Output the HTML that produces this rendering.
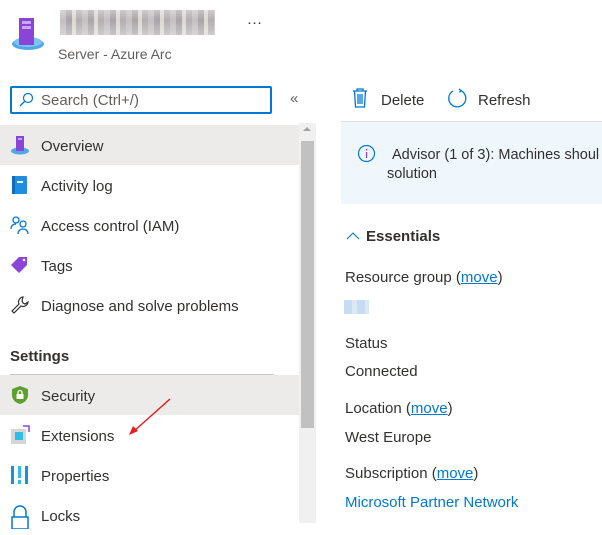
<!DOCTYPE html>
<html><head><style>
*{margin:0;padding:0;box-sizing:border-box}
body{width:602px;height:523px;overflow:hidden;background:#fff;font-family:"Liberation Sans",sans-serif;color:#323130;position:relative;font-size:15px}
.a{position:absolute;white-space:nowrap}
.row{position:absolute;left:0;width:299px;height:40px}
.row span{position:absolute;left:41px;top:13px}
.ic{position:absolute;left:10px;top:10px}
a{color:#0078d4;text-decoration:underline}
</style></head><body>
<svg class="a" style="left:8px;top:15px" width="40" height="38" viewBox="0 0 40 38"><ellipse cx="20" cy="29" rx="16" ry="6" fill="#50a8e8"/><ellipse cx="20" cy="27" rx="14" ry="5" fill="#7fc3f2"/><rect x="11" y="3" width="15" height="27" fill="#8a44d8"/><rect x="14" y="6" width="9" height="3" fill="#c9a6f2"/><rect x="14" y="11" width="9" height="3" fill="#c9a6f2"/></svg>
<div class="a" style="left:60px;top:10px;width:155px;height:25px;background:linear-gradient(180deg,rgba(255,255,255,.35),rgba(255,255,255,0) 40%,rgba(255,255,255,.35)),repeating-linear-gradient(90deg,#c4bfc0 0 6px,#a9a4a8 6px 12px,#dcd7d3 12px 16px,#b3aeb1 16px 22px);"></div>
<div class="a" style="left:247px;top:14px;font-size:15px;color:#323130">···</div>
<div class="a" style="left:58px;top:46px;font-size:14px;color:#605e5c">Server - Azure Arc</div>
<div class="a" style="left:10px;top:86px;width:262px;height:28px;border:2px solid #0078d4;border-radius:2px"></div>
<svg class="a" style="left:18px;top:92px" width="16" height="16" viewBox="0 0 16 16"><circle cx="10" cy="6" r="4.5" fill="none" stroke="#0078d4" stroke-width="1.2"/><path d="M7 9L2 14" stroke="#0078d4" stroke-width="1.3"/></svg>
<div class="a" style="left:41px;top:92px;font-size:15px;color:#605e5c">Search (Ctrl+/)</div>
<div class="a" style="left:290px;top:90px;font-size:15px;color:#605e5c">«</div>
<div class="a" style="left:299px;top:123px;width:17px;height:400px;background:#f0f0f0"></div>
<div class="a" style="left:301px;top:141px;width:13px;height:287px;background:#c1c1c1"></div>
<div class="a" style="left:303px;top:127px;width:0;height:0;border-left:4px solid transparent;border-right:4px solid transparent;border-bottom:4px solid #a3a3a3"></div>
<div class="row" style="top:125px;background:#edebe9"><svg class="ic" width="20" height="20" viewBox="0 0 20 20"><ellipse cx="10" cy="16" rx="9" ry="3.5" fill="#50a8e8"/><rect x="6" y="1" width="8" height="15" fill="#8a44d8"/><rect x="8" y="3" width="4" height="2" fill="#c9a6f2"/></svg><span>Overview</span></div>
<div class="row" style="top:165px"><svg class="ic" width="20" height="20" viewBox="0 0 20 20"><rect x="2" y="1" width="15" height="18" rx="1" fill="#1f8ee0"/><rect x="2" y="1" width="3" height="18" fill="#0f6cbd"/><rect x="7" y="6" width="6" height="2" fill="#fff"/></svg><span>Activity log</span></div>
<div class="row" style="top:205px"><svg class="ic" width="20" height="20" viewBox="0 0 20 20" fill="none" stroke="#0078d4" stroke-width="1.3"><circle cx="6" cy="5" r="3"/><path d="M1 14c0-3 2-5 5-5"/><circle cx="13" cy="9" r="3"/><path d="M8 19c0-3 2-5 5-5s5 2 5 5"/></svg><span>Access control (IAM)</span></div>
<div class="row" style="top:245px"><svg class="ic" width="20" height="20" viewBox="0 0 20 20"><path d="M9 2h8v8l-8 8-8-8z" fill="#8a44d8"/><circle cx="14" cy="5" r="1.3" fill="#fff"/></svg><span>Tags</span></div>
<div class="row" style="top:285px"><svg class="ic" width="20" height="20" viewBox="0 0 20 20" fill="none" stroke="#323130" stroke-width="1.2"><path d="M13 2a5 5 0 0 0-4 7l-7 7 2 2 7-7a5 5 0 0 0 7-4l-3 2-2-1-1-2z"/></svg><span>Diagnose and solve problems</span></div>
<div class="a" style="left:10px;top:348px;font-size:15px;font-weight:bold;color:#323130">Settings</div>
<div class="a" style="left:10px;top:374px;width:264px;height:1px;background:#c8c6c4"></div>
<div class="row" style="top:375px;background:#edebe9"><svg class="ic" width="20" height="20" viewBox="0 0 20 20"><path d="M10 1l8 3v6c0 5-4 8-8 9-4-1-8-4-8-9V4z" fill="#5ea02f"/><rect x="6.5" y="9" width="7" height="5" fill="#fff"/><path d="M8 9V7.5a2 2 0 0 1 4 0V9" stroke="#fff" fill="none" stroke-width="1.3"/></svg><span>Security</span></div>
<div class="row" style="top:415px"><svg class="ic" width="20" height="20" viewBox="0 0 20 20"><rect x="1" y="4" width="15" height="15" fill="#d6d6d6"/><rect x="5" y="7" width="8" height="8" fill="#30bde8"/><path d="M13 1h6v6" stroke="#8a44d8" stroke-width="1.5" fill="none"/></svg><span>Extensions</span></div>
<div class="row" style="top:455px"><svg class="ic" width="20" height="20" viewBox="0 0 20 20"><rect x="1" y="1" width="3" height="18" fill="#1f8ee0"/><rect x="8" y="1" width="3" height="12" fill="#30bde8"/><rect x="8" y="15" width="3" height="4" fill="#30bde8"/><rect x="15" y="1" width="3" height="18" fill="#1f8ee0"/></svg><span>Properties</span></div>
<div class="row" style="top:495px"><svg class="ic" width="20" height="24" viewBox="0 0 20 24"><path d="M4 12V7a6 6 0 0 1 12 0v5" stroke="#0078d4" stroke-width="1.5" fill="none"/><rect x="2" y="12" width="16" height="12" fill="none" stroke="#0078d4" stroke-width="1.5"/></svg><span>Locks</span></div>
<svg class="a" style="left:125px;top:395px" width="50" height="40" viewBox="0 0 50 40"><path d="M45 4L8 37" stroke="#e81c1c" stroke-width="1.5"/><path d="M4 40l4-9 5 5z" fill="#e81c1c"/></svg>
<svg class="a" style="left:352px;top:88px" width="16" height="20" viewBox="0 0 16 20" fill="none" stroke="#0078d4" stroke-width="1.3"><path d="M1 3h14M5 3V1h6v2M2.5 3l1 16h9l1-16M6 6v10M8 6v10M10 6v10"/></svg>
<div class="a" style="left:381px;top:92px">Delete</div>
<svg class="a" style="left:447px;top:88px" width="21" height="21" viewBox="0 0 21 21" fill="none" stroke="#0078d4" stroke-width="1.3"><path d="M6 3A8.5 8.5 0 1 0 13 2.3"/><path d="M12 1l2 1.5-1.5 2"/></svg>
<div class="a" style="left:478px;top:92px">Refresh</div>
<div class="a" style="left:341px;top:121px;width:261px;height:83px;background:#eff6fc;border-top:1px solid #e1dfdd"></div>
<svg class="a" style="left:357px;top:144px" width="19" height="19" viewBox="0 0 19 19"><circle cx="9.5" cy="9.5" r="8" fill="none" stroke="#0078d4" stroke-width="1.2"/><rect x="8.9" y="8" width="1.3" height="6" fill="#8a44d8"/><rect x="8.9" y="5" width="1.3" height="1.4" fill="#8a44d8"/></svg>
<div class="a" style="left:392px;top:147px;font-size:14.5px">Advisor (1 of 3): Machines shoul</div>
<div class="a" style="left:387px;top:166px;font-size:14.5px">solution</div>
<svg class="a" style="left:346px;top:231px" width="14" height="10" viewBox="0 0 14 10"><path d="M1 8l6-6 6 6" stroke="#0078d4" fill="none" stroke-width="1.1"/></svg>
<div class="a" style="left:366px;top:228px;font-weight:bold;font-size:15px">Essentials</div>
<div class="a" style="left:345px;top:269px">Resource group (<a>move</a>)</div>
<div class="a" style="left:344px;top:300px;width:25px;height:14px;background:repeating-linear-gradient(90deg,#c7dcf2 0 8px,#dbe8f6 8px 13px)"></div>
<div class="a" style="left:345px;top:335px">Status</div>
<div class="a" style="left:345px;top:363px">Connected</div>
<div class="a" style="left:345px;top:400px">Location (<a>move</a>)</div>
<div class="a" style="left:345px;top:429px">West Europe</div>
<div class="a" style="left:345px;top:465px">Subscription (<a>move</a>)</div>
<div class="a" style="left:345px;top:494px;color:#0078d4">Microsoft Partner Network</div>
</body></html>
